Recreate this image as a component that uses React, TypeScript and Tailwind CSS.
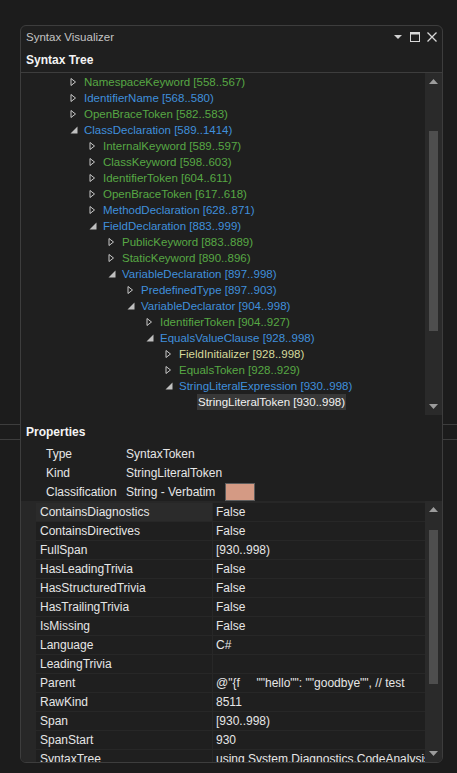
import React from "react";

type Node = {
  level: number;
  name: string;
  span: string;
  kind: "node" | "token" | "trivia" | "leaf";
  open?: boolean;
};

const tree: Node[] = [
  { level: 0, name: "NamespaceKeyword", span: "[558..567)", kind: "token" },
  { level: 0, name: "IdentifierName", span: "[568..580)", kind: "node" },
  { level: 0, name: "OpenBraceToken", span: "[582..583)", kind: "token" },
  { level: 0, name: "ClassDeclaration", span: "[589..1414)", kind: "node", open: true },
  { level: 1, name: "InternalKeyword", span: "[589..597)", kind: "token" },
  { level: 1, name: "ClassKeyword", span: "[598..603)", kind: "token" },
  { level: 1, name: "IdentifierToken", span: "[604..611)", kind: "token" },
  { level: 1, name: "OpenBraceToken", span: "[617..618)", kind: "token" },
  { level: 1, name: "MethodDeclaration", span: "[628..871)", kind: "node" },
  { level: 1, name: "FieldDeclaration", span: "[883..999)", kind: "node", open: true },
  { level: 2, name: "PublicKeyword", span: "[883..889)", kind: "token" },
  { level: 2, name: "StaticKeyword", span: "[890..896)", kind: "token" },
  { level: 2, name: "VariableDeclaration", span: "[897..998)", kind: "node", open: true },
  { level: 3, name: "PredefinedType", span: "[897..903)", kind: "node" },
  { level: 3, name: "VariableDeclarator", span: "[904..998)", kind: "node", open: true },
  { level: 4, name: "IdentifierToken", span: "[904..927)", kind: "token" },
  { level: 4, name: "EqualsValueClause", span: "[928..998)", kind: "node", open: true },
  { level: 5, name: "FieldInitializer", span: "[928..998)", kind: "trivia" },
  { level: 5, name: "EqualsToken", span: "[928..929)", kind: "token" },
  { level: 5, name: "StringLiteralExpression", span: "[930..998)", kind: "node", open: true },
  { level: 6, name: "StringLiteralToken", span: "[930..998)", kind: "leaf" },
];

const props: [string, string][] = [
  ["ContainsDiagnostics", "False"],
  ["ContainsDirectives", "False"],
  ["FullSpan", "[930..998)"],
  ["HasLeadingTrivia", "False"],
  ["HasStructuredTrivia", "False"],
  ["HasTrailingTrivia", "False"],
  ["IsMissing", "False"],
  ["Language", "C#"],
  ["LeadingTrivia", ""],
  ["Parent", '@"{f     ""hello"": ""goodbye"", // test'],
  ["RawKind", "8511"],
  ["Span", "[930..998)"],
  ["SpanStart", "930"],
  ["SyntaxTree", "using System.Diagnostics.CodeAnalysis;"],
];

const colorFor = {
  node: "text-[#3f8fdc]",
  token: "text-[#57a844]",
  trivia: "text-[#d6da9c]",
  leaf: "text-[#f2f2f2]",
};

function Collapsed() {
  return (
    <svg width="7" height="10" viewBox="0 0 7 10">
      <path d="M1 1.5 L5.5 5 L1 8.5 Z" fill="none" stroke="#c8c8c8" strokeWidth="1" />
    </svg>
  );
}

function Expanded() {
  return (
    <svg width="8" height="8" viewBox="0 0 8 8">
      <path d="M7.5 0.5 L7.5 7.5 L0.5 7.5 Z" fill="#c0c0c0" />
    </svg>
  );
}

function ScrollBar({ thumbTop, thumbHeight }: { thumbTop: number; thumbHeight: number }) {
  return (
    <div className="flex w-[17px] shrink-0 flex-col bg-[#2a2a2a]">
      <div className="flex h-[17px] items-center justify-center">
        <svg width="9" height="5" viewBox="0 0 9 5">
          <path d="M0 5 L4.5 0 L9 5 Z" fill="#9c9c9c" />
        </svg>
      </div>
      <div
        className="mx-auto w-[9px] bg-[#4e4e4e]"
        style={{ marginTop: thumbTop, height: thumbHeight }}
      />
      <div className="flex-1" />
      <div className="flex h-[17px] items-center justify-center">
        <svg width="9" height="5" viewBox="0 0 9 5">
          <path d="M0 0 L9 0 L4.5 5 Z" fill="#9c9c9c" />
        </svg>
      </div>
    </div>
  );
}

function Gutter() {
  return (
    <div className="flex flex-1 flex-col">
      <div className="h-[424px]" />
      <div className="h-px bg-[#3d3d3d]" />
      <div className="h-[14px]" />
      <div className="h-px bg-[#3d3d3d]" />
    </div>
  );
}

export default function App() {
  return (
    <div className="flex h-[773px] w-[457px] bg-[#1c1c1c] font-['Segoe_UI','Liberation_Sans',Arial,sans-serif] text-[12px] leading-[16px]">
      <div className="flex w-[20px] shrink-0">
        <Gutter />
      </div>

      <div className="mt-[25px] flex h-[738px] w-[423px] shrink-0 flex-col overflow-hidden rounded-[6px] border border-[#3d3d3d] bg-[#1f1f1f]">
        {/* title bar */}
        <div className="flex h-[21px] shrink-0 items-center pl-[5px] pr-[5px] text-[11.5px] text-[#c4c4c4]">
          <span className="flex-1">Syntax Visualizer</span>
          <svg width="8" height="4" viewBox="0 0 8 4" className="mr-[8px]">
            <path d="M0 0 L8 0 L4 4 Z" fill="#d0d0d0" />
          </svg>
          <svg width="10" height="10" viewBox="0 0 10 10" className="mr-[7px]">
            <rect x="0.5" y="0.5" width="9" height="9" fill="none" stroke="#d8d8d8" />
            <rect x="0.5" y="0.5" width="9" height="2" fill="#d8d8d8" />
          </svg>
          <svg width="10" height="10" viewBox="0 0 10 10">
            <path d="M0.5 0.5 L9.5 9.5 M9.5 0.5 L0.5 9.5" stroke="#d8d8d8" strokeWidth="1.3" />
          </svg>
        </div>

        <div className="flex h-[26px] shrink-0 items-center border-b border-[#3d3d3d] pl-[5px] font-bold text-[#f4f4f4]">
          Syntax Tree
        </div>

        {/* tree */}
        <div className="flex h-[342px] shrink-0">
          <div className="flex-1 overflow-hidden pt-[1px] text-[11.5px]">
            {tree.map((n, i) => (
              <div
                key={i}
                className="flex h-[16px] items-center whitespace-nowrap"
                style={{ paddingLeft: 47 + n.level * 19 }}
              >
                <span className="flex w-[16px] shrink-0 items-center pl-[2px]">
                  {n.kind !== "leaf" && (n.open ? <Expanded /> : <Collapsed />)}
                </span>
                <span
                  className={`${colorFor[n.kind]} ${n.kind === "leaf" ? "-ml-px bg-[#383838] px-px" : ""}`}
                >
                  {n.name} {n.span}
                </span>
              </div>
            ))}
          </div>
          <ScrollBar thumbTop={41} thumbHeight={200} />
        </div>

        {/* properties header */}
        <div className="flex h-[86px] shrink-0 flex-col pt-[9px] text-[#e6e6e6]">
          <div className="h-[16px] pl-[5px] font-bold text-[#f4f4f4]">Properties</div>
          <div className="mt-[4px] flex h-[19px] items-center pl-[25px]">
            <span className="w-[80px]">Type</span>
            <span>SyntaxToken</span>
          </div>
          <div className="flex h-[19px] items-center pl-[25px]">
            <span className="w-[80px]">Kind</span>
            <span>StringLiteralToken</span>
          </div>
          <div className="flex h-[19px] items-center pl-[25px]">
            <span className="w-[80px]">Classification</span>
            <span>String - Verbatim</span>
            <span className="ml-[10px] h-[18px] w-[30px] border border-[#5c5c5c] bg-[#d49a84]" />
          </div>
        </div>

        {/* property grid */}
        <div className="flex min-h-0 flex-1">
          <div className="flex flex-1 flex-col gap-px overflow-hidden bg-[#272727] pl-[15px] pt-[2px] text-[#e6e6e6]">
            {props.map(([k, v], i) => (
              <div key={k} className="grid h-[18px] shrink-0 grid-cols-[176px_1fr] gap-px">
                <div
                  className={`flex items-center whitespace-nowrap pl-[4px] ${i === 0 ? "bg-[#2b2b2b]" : "bg-[#1f1f1f]"}`}
                >
                  {k}
                </div>
                <div className="flex items-center overflow-hidden whitespace-pre bg-[#1f1f1f] pl-[3px]">
                  {v}
                </div>
              </div>
            ))}
          </div>
          <ScrollBar thumbTop={12} thumbHeight={154} />
        </div>
      </div>

      <div className="flex flex-1">
        <Gutter />
      </div>
    </div>
  );
}
